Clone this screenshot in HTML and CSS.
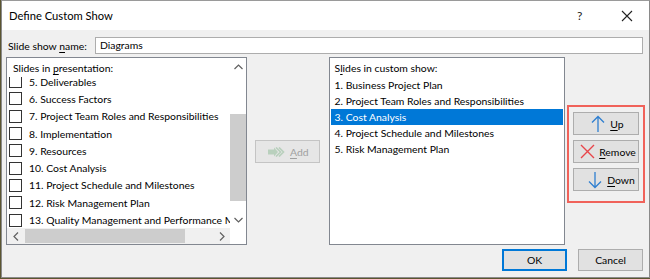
FILE: index.html
```html
<!DOCTYPE html>
<html lang="en">
<head>
    <meta charset="UTF-8">
    <title>Define Custom Show</title>
    <link rel="stylesheet" href="styles.css">
</head>
<body>
    <div class="dialog">
        <div class="titlebar">
            <span class="title">Define Custom Show</span>
            <span class="help">?</span>
            <span class="close">
                <svg width="12" height="12" viewBox="0 0 12 12"><path d="M1 1 L11 11 M11 1 L1 11" stroke="#222" stroke-width="1.1"/></svg>
            </span>
        </div>
        <div class="content">
            <div class="name-row">
                <span class="label">Slide show <u>n</u>ame:</span>
                <div class="textbox">Diagrams</div>
            </div>

            <div class="main">
                <div class="listbox left">
                    <div class="list-area">
                        <div class="list-label">Slides in <u>p</u>resentation:</div>
                        <div class="items">
                            <div class="check-item first"><span class="box"></span>5. Deliverables</div>
                            <div class="check-item"><span class="box"></span>6. Success Factors</div>
                            <div class="check-item"><span class="box"></span>7. Project Team Roles and Responsibilities</div>
                            <div class="check-item"><span class="box"></span>8. Implementation</div>
                            <div class="check-item"><span class="box"></span>9. Resources</div>
                            <div class="check-item"><span class="box"></span>10. Cost Analysis</div>
                            <div class="check-item"><span class="box"></span>11. Project Schedule and Milestones</div>
                            <div class="check-item"><span class="box"></span>12. Risk Management Plan</div>
                            <div class="check-item"><span class="box"></span>13. Quality Management and Performance Metrics</div>
                        </div>
                    </div>
                    <div class="vscroll">
                        <span class="arrow">
                            <svg width="9" height="6" viewBox="0 0 9 6"><path d="M0.5 5 L4.5 1 L8.5 5" fill="none" stroke="#606060" stroke-width="1.2"/></svg>
                        </span>
                        <div class="vtrack"><div class="vthumb"></div></div>
                        <span class="arrow">
                            <svg width="9" height="6" viewBox="0 0 9 6"><path d="M0.5 1 L4.5 5 L8.5 1" fill="none" stroke="#606060" stroke-width="1.2"/></svg>
                        </span>
                    </div>
                    <div class="hscroll">
                        <span class="arrow">
                            <svg width="6" height="9" viewBox="0 0 6 9"><path d="M5 0.5 L1 4.5 L5 8.5" fill="none" stroke="#606060" stroke-width="1.2"/></svg>
                        </span>
                        <div class="htrack"><div class="hthumb"></div></div>
                        <span class="arrow">
                            <svg width="6" height="9" viewBox="0 0 6 9"><path d="M1 0.5 L5 4.5 L1 8.5" fill="none" stroke="#606060" stroke-width="1.2"/></svg>
                        </span>
                    </div>
                    <div class="corner"></div>
                </div>

                <div class="middle">
                    <div class="btn add">
                        <svg width="20" height="10" viewBox="0 0 20 10">
                            <path d="M1 2.5 H7 V0.5 L11 5 L7 9.5 V7.5 H1 Z" fill="#b9d0bd"/>
                            <path d="M9 0.5 L13.5 5 L9 9.5 M12 0.5 L16.5 5 L12 9.5" fill="none" stroke="#b9d0bd" stroke-width="1.6"/>
                        </svg>
                        <span><u>A</u>dd</span>
                    </div>
                </div>

                <div class="listbox right">
                    <div class="list-label">S<u>l</u>ides in custom show:</div>
                    <div class="show-item">1. Business Project Plan</div>
                    <div class="show-item">2. Project Team Roles and Responsibilities</div>
                    <div class="show-item selected">3. Cost Analysis</div>
                    <div class="show-item">4. Project Schedule and Milestones</div>
                    <div class="show-item">5. Risk Management Plan</div>
                </div>

                <div class="side">
                    <div class="btn side-btn">
                        <svg width="14" height="18" viewBox="0 0 14 18"><path d="M7 17 V1.5 M1 7.5 L7 1.5 L13 7.5" fill="none" stroke="#2f7fd0" stroke-width="1.3"/></svg>
                        <span><u>U</u>p</span>
                    </div>
                    <div class="btn side-btn">
                        <svg width="15" height="15" viewBox="0 0 15 15"><path d="M1 1 L14 14 M14 1 L1 14" stroke="#e8454a" stroke-width="1.4"/></svg>
                        <span><u>R</u>emove</span>
                    </div>
                    <div class="btn side-btn">
                        <svg width="14" height="18" viewBox="0 0 14 18"><path d="M7 1 V16.5 M1 10.5 L7 16.5 L13 10.5" fill="none" stroke="#2f7fd0" stroke-width="1.3"/></svg>
                        <span><u>D</u>own</span>
                    </div>
                </div>
            </div>

            <div class="footer">
                <div class="btn footer-btn default">OK</div>
                <div class="btn footer-btn">Cancel</div>
            </div>
        </div>
    </div>
</body>
</html>
```

FILE: styles.css
```css
html, body {
    margin: 0;
    padding: 0;
}
body {
    width: 650px;
    height: 279px;
    background: #5b5530;
    font-family: Lato, "Noto Sans", sans-serif;
    font-size: 10.4px;
    color: #000;
    overflow: hidden;
}
u {
    text-decoration-thickness: 1px;
    text-underline-offset: 2px;
}
svg {
    flex-shrink: 0;
}
.dialog {
    margin-left: 1px;
    width: 647px;
    height: 276px;
    border: 1px solid #8a8a8a;
    border-top-color: #9a9a9a;
    background: #f0f0f0;
    display: flex;
    flex-direction: column;
}
.titlebar {
    height: 29px;
    background: #fff;
    display: flex;
    align-items: center;
    padding-left: 7px;
    font-size: 11.2px;
}
.title {
    flex: 1;
}
.help {
    width: 14px;
    font-size: 12px;
    margin-right: 30px;
    color: #222;
}
.close {
    width: 12px;
    display: flex;
    margin-right: 16px;
}
.content {
    flex: 1;
    display: flex;
    flex-direction: column;
    padding: 7px 4px 0 4px;
}
.name-row {
    display: flex;
    align-items: center;
    height: 17px;
}
.name-row .label {
    width: 87px;
    padding-left: 2px;
    white-space: nowrap;
}
.textbox {
    flex: 1;
    height: 15px;
    border: 1px solid #adadad;
    background: #fff;
    padding-left: 4px;
    line-height: 15px;
    margin-right: 2px;
}
.main {
    display: flex;
    margin-top: 3px;
    height: 188px;
}
.listbox {
    background: #fff;
    border: 1px solid #828790;
    box-sizing: border-box;
    height: 188px;
}
.listbox.left {
    width: 241px;
    display: grid;
    grid-template-columns: 223px 16px;
    grid-template-rows: 170px 16px;
}
.list-area {
    overflow: hidden;
    display: flex;
    flex-direction: column;
}
.list-label {
    height: 17px;
    line-height: 17px;
    padding-left: 6px;
    margin-top: 2px;
    position: relative;
    z-index: 1;
    background: #fff;
    white-space: nowrap;
}
.items {
    margin-top: -4px;
}
.check-item {
    height: 17.3px;
    display: flex;
    align-items: center;
    white-space: nowrap;
    padding-left: 2px;
}
.box {
    width: 11px;
    height: 11px;
    border: 1px solid #333;
    background: #fff;
    margin-right: 7px;
    flex-shrink: 0;
}
.vscroll {
    background: #fff;
    display: flex;
    flex-direction: column;
}
.vscroll .arrow, .hscroll .arrow {
    display: flex;
    align-items: center;
    justify-content: center;
    flex-shrink: 0;
}
.vscroll .arrow {
    height: 17px;
}
.vtrack {
    flex: 1;
    padding: 39px 0 10px 0;
}
.vthumb {
    height: 100%;
    background: #cdcdcd;
}
.hscroll {
    background: #f0f0f0;
    display: flex;
}
.hscroll .arrow {
    width: 17px;
}
.htrack {
    flex: 1;
    padding: 1px 28px 1px 1px;
}
.hthumb {
    height: 100%;
    background: #cdcdcd;
}
.corner {
    background: #fff;
}
.middle {
    width: 82px;
    display: flex;
    align-items: center;
    justify-content: center;
}
.btn {
    box-sizing: border-box;
    border: 1px solid #adadad;
    background: #e1e1e1;
    display: flex;
    align-items: center;
    justify-content: center;
}
.add {
    width: 65px;
    height: 23px;
    margin-top: 1px;
    background: #e6e6e6;
    border-color: #c4c4c4;
    color: #a0a0a0;
    gap: 3px;
}
.listbox.right {
    width: 238px;
    padding: 1px 1px;
}
.right .list-label {
    margin-top: 1px;
    padding-left: 4px;
}
.show-item {
    height: 16px;
    line-height: 16px;
    padding-left: 4px;
    white-space: nowrap;
}
.show-item.selected {
    background: #0078d7;
    color: #fff;
}
.side {
    margin-left: 2px;
    margin-top: 48px;
    width: 78px;
    height: 98px;
    box-sizing: border-box;
    border: 2px solid #f0625a;
    display: flex;
    flex-direction: column;
    align-items: center;
    gap: 5px;
    padding-top: 5px;
    align-self: flex-start;
}
.side-btn {
    width: 66px;
    height: 23px;
    gap: 5px;
    justify-content: flex-start;
    padding-left: 17px;
}
.side-btn:nth-child(2) {
    padding-left: 6px;
    gap: 4px;
}
.side-btn:nth-child(3) {
    padding-left: 14px;
}
.footer {
    display: flex;
    justify-content: flex-end;
    gap: 11px;
    margin-top: 4px;
    padding-right: 2px;
}
.footer-btn {
    width: 65px;
    height: 22px;
}
.footer-btn.default {
    border: 2px solid #0078d7;
}
```
